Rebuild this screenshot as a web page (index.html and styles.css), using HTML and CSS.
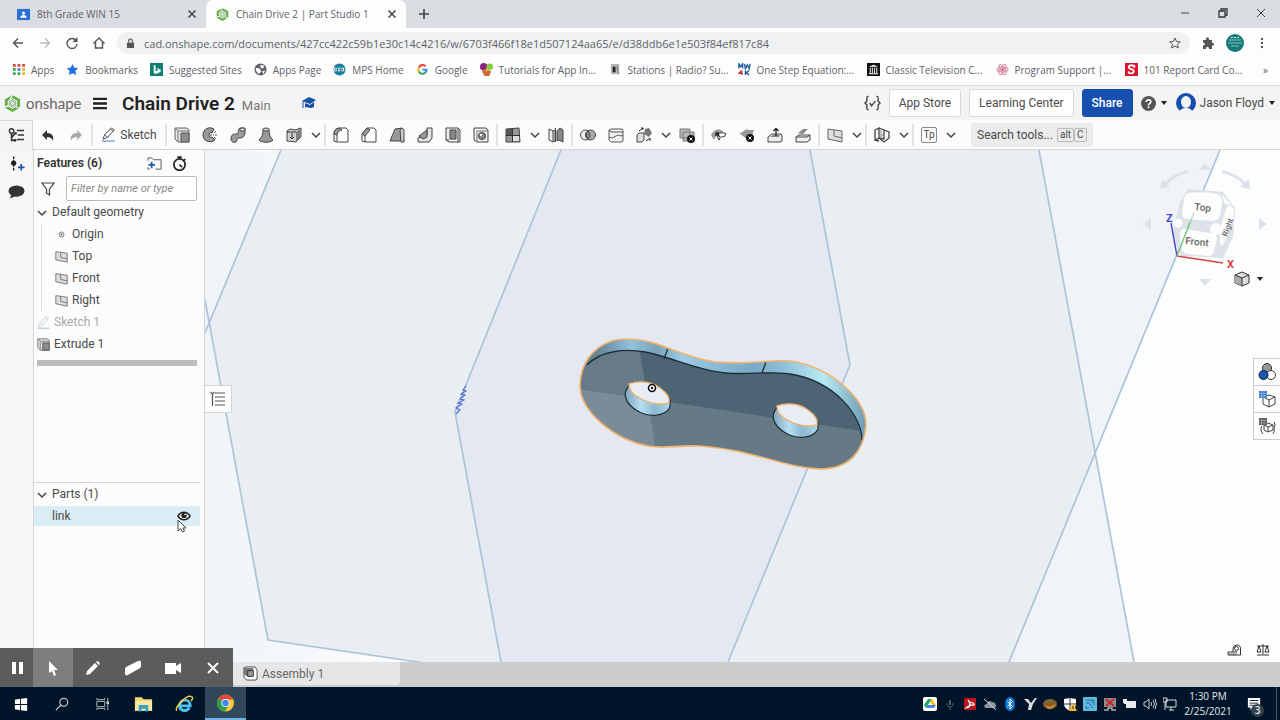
FILE: index.html
```html
<!DOCTYPE html>
<html lang="en">
<head>
    <meta charset="UTF-8">
    <meta name="viewport" content="width=device-width, initial-scale=1.0">
    <title>Chain Drive 2 | Part Studio 1</title>
    <link rel="stylesheet" href="styles.css">
</head>
<body>
    <!-- shared icons -->
    <svg class="sprite" aria-hidden="true">
        <symbol id="i-close" viewBox="0 0 10 10"><path d="M1.5 1.5l7 7M8.5 1.5l-7 7" fill="none" stroke="currentColor" stroke-width="1.5"/></symbol>
        <symbol id="i-chevron" viewBox="0 0 10 10"><path d="M1 3l4 4 4-4" fill="none" stroke="#444" stroke-width="1.5"/></symbol>
        <symbol id="i-caret" viewBox="0 0 8 8"><path d="M1 2h6L4 6z" fill="currentColor"/></symbol>
        <symbol id="i-logo" viewBox="0 0 18 18">
            <path d="M9 0l8 4.500v9L9 18l-8-4.500v-9z" fill="#5fb146"/>
            <path d="M9 3.500l5 2.700v5.600l-5 2.700-5-2.700V6.200z" fill="#fff"/>
            <path d="M9 0L6.500 4.500M17 13.500h-4M1 13l4-2" stroke="#fff" stroke-width="1.300"/>
            <path d="M9 5l3.500 2v4L9 13l-3.500-2V7z" fill="none" stroke="#888"/>
            <circle cx="9" cy="9" r="2" fill="#fff" stroke="#5fb146"/>
        </symbol>
        <symbol id="i-extrude" viewBox="0 0 16 16">
            <path d="M1 1h12l2 2v12H4l-3-3z" fill="#e4e4e4" stroke="#666"/>
            <path d="M4 15V4h11M1 1l3 3" fill="none" stroke="#777"/>
            <path d="M7 6h8v9H7z" fill="#8d8d8d" stroke="#555"/>
        </symbol>
        <symbol id="i-sketch" viewBox="0 0 16 16">
            <path d="M2 13l2-5 7-7 3 2-7 8zM4 8l3 3M10 2l3 3" fill="none" stroke="currentColor"/>
            <path d="M1 15h14" stroke="#5b8fc9" stroke-width="1.2"/>
        </symbol>
        <symbol id="i-plane" viewBox="0 0 16 16">
            <path d="M1 2l14 2v11L1 12z" fill="#ddd" stroke="#666"/>
            <path d="M7 3v6l8 2" fill="none" stroke="#666"/>
        </symbol>
    </svg>

    <header class="browser">
        <nav class="tab-bar" aria-label="Browser tabs">
            <div class="tab">
                <svg class="tab-icon" viewBox="0 0 14 14"><path d="M0 1h14v12H0z" fill="#2a6fd6"/><circle cx="7" cy="5.5" r="1.7" fill="#fff"/><path d="M3.5 10.5c0-4 7-4 7 0z" fill="#fff"/></svg>
                <a href="#">8th Grade WIN 15</a>
                <button class="tab-close" aria-label="Close tab"><svg><use href="#i-close"/></svg></button>
            </div>
            <div class="tab tab-active">
                <svg class="tab-icon"><use href="#i-logo"/></svg>
                <a href="#">Chain Drive 2 | Part Studio 1</a>
                <button class="tab-close" aria-label="Close tab"><svg><use href="#i-close"/></svg></button>
            </div>
            <button class="new-tab" aria-label="New tab"><svg viewBox="0 0 12 12"><path d="M6 1v10M1 6h10" stroke="#444" stroke-width="1.6"/></svg></button>
            <div class="window-buttons">
                <button aria-label="Minimize"><svg viewBox="0 0 10 10"><path d="M1 5h8" stroke="#444"/></svg></button>
                <button aria-label="Restore"><svg viewBox="0 0 10 10"><path d="M1 3h6v6H1zM3 3V1h6v6H7" fill="none" stroke="#333" stroke-width="1.3"/></svg></button>
                <button aria-label="Close"><svg viewBox="0 0 10 10"><path d="M1 1l8 8M9 1L1 9" stroke="#444"/></svg></button>
            </div>
        </nav>

        <div class="address-row">
            <button class="nav-btn" aria-label="Back"><svg viewBox="0 0 12 12"><path d="M11 6H1.5M6 1.5L1.5 6 6 10.5" fill="none" stroke="#555" stroke-width="1.4"/></svg></button>
            <button class="nav-btn" aria-label="Forward"><svg viewBox="0 0 12 12"><path d="M1 6h9.5M6 1.5L10.5 6 6 10.5" fill="none" stroke="#bbb" stroke-width="1.4"/></svg></button>
            <button class="nav-btn" aria-label="Reload"><svg viewBox="0 0 12 12"><path d="M10 3.500A5 5 0 1 0 11 7" fill="none" stroke="#555" stroke-width="1.4"/><path d="M11.500 0v5h-5z" fill="#555"/></svg></button>
            <button class="nav-btn" aria-label="Home"><svg viewBox="0 0 12 12"><path d="M.5 6.500L6 1l5.500 5.500M2.500 5v6h7V5" fill="none" stroke="#555" stroke-width="1.4"/></svg></button>
            <div class="omnibox">
                <svg class="lock" viewBox="0 0 10 12"><path d="M1 5h8v6H1z" fill="#555"/><path d="M3 5V3a2 2 0 0 1 4 0v2" fill="none" stroke="#555" stroke-width="1.3"/></svg>
                <input type="text" aria-label="Address" value="cad.onshape.com/documents/427cc422c59b1e30c14c4216/w/6703f466f18e1d507124aa65/e/d38ddb6e1e503f84ef817c84">
                <button aria-label="Bookmark"><svg viewBox="0 0 12 12"><path d="M6 1l1.500 3.500 3.700.3-2.800 2.500.9 3.700L6 9l-3.300 2 .9-3.700L.8 4.800l3.700-.3z" fill="none" stroke="#555"/></svg></button>
            </div>
            <button class="ext-btn" aria-label="Extensions"><svg viewBox="0 0 12 12"><path d="M1 3h3c-.8-3.300 3.800-3.300 3 0h3v3c3-.5 3 3 0 2.500V12H7c0-3-3-3-3 0H1V8.500c2.500 0 2.500-3 0-3z" fill="#555"/></svg></button>
            <button class="ext-btn profile" aria-label="Profile"><svg viewBox="0 0 18 18"><circle cx="9" cy="9" r="9" fill="#137a78"/><path d="M3 6h12M2 9h14M5 12h8" stroke="#8cc5c2"/><path d="M5 3.500h8" stroke="#cfe6e4" stroke-dasharray="2 1"/></svg></button>
            <button class="ext-btn" aria-label="Menu"><svg viewBox="0 0 12 12"><circle cx="6" cy="2" r="1.2" fill="#555"/><circle cx="6" cy="6" r="1.2" fill="#555"/><circle cx="6" cy="10" r="1.2" fill="#555"/></svg></button>
        </div>

        <nav class="bookmarks" aria-label="Bookmarks">
            <a href="#"><svg viewBox="0 0 14 14"><path d="M1 2.500h3m2 0h3m2 0h3" stroke="#d84a3b" stroke-width="3"/><path d="M1 7h3" stroke="#3fa757" stroke-width="3"/><path d="M6 7h3" stroke="#4285f4" stroke-width="3"/><path d="M11 7h3m-3 4.500h3" stroke="#f0b429" stroke-width="3"/><path d="M1 11.500h3m2 0h3" stroke="#3fa757" stroke-width="3"/></svg>Apps</a>
            <a href="#"><svg viewBox="0 0 14 14"><path d="M7 1l2 4 4 .5-3 3 1 4.500L7 11l-4 2 1-4.500-3-3L5 5z" fill="#1f6fe0"/></svg>Bookmarks</a>
            <a href="#"><svg viewBox="0 0 14 14"><path d="M0 0h14v14H0z" fill="#0b8173"/><path d="M4 2l2 1v6l3-1.500L6.500 5l5 2v2.500L6 12l-2-1.500z" fill="#fff"/></svg>Suggested Sites</a>
            <a href="#"><svg viewBox="0 0 14 14"><circle cx="7" cy="7" r="6.5" fill="#5f6368"/><path d="M2 5l4 1 2 3-3 3-3-4zM7 2l4 1-1 3-3-1zM9 9l3-1-2 4z" fill="#fff"/></svg>Apps Page</a>
            <a href="#"><svg viewBox="0 0 14 14"><circle cx="7" cy="7" r="6.5" fill="#1583a0"/><path d="M1 7h12" stroke="#fff" stroke-width="4" stroke-dasharray="3 1"/><path d="M2 7h10" stroke="#17517a" stroke-width="2" stroke-dasharray="1 1"/></svg>MPS Home</a>
            <a href="#"><svg viewBox="0 0 14 14"><g fill="none" stroke-width="2.2"><path d="M3 5a4.500 4.500 0 0 1 7.500-1.500" stroke="#ea4335"/><path d="M3 5a4.500 4.500 0 0 0 0 4" stroke="#fbbc05"/><path d="M3 9a4.500 4.500 0 0 0 7 1.500" stroke="#34a853"/><path d="M10 10.500c1-1 1.300-2 1.300-3.300H7" stroke="#4285f4"/></g></svg>Google</a>
            <a href="#" class="long"><svg viewBox="0 0 14 14"><circle cx="4" cy="4" r="4" fill="#8a2585"/><circle cx="10.5" cy="4" r="3.5" fill="#8cc63f"/><path d="M2 9l5-2 5 2-2 5H5z" fill="#cc6a2b"/><path d="M6 6h2v3H6z" fill="#f2c230"/></svg>Tutorials for App In...</a>
            <a href="#" class="long"><svg viewBox="0 0 14 14"><path d="M2 1h9v11H2z" fill="#b5b5b5"/><path d="M4 4h3v6H4z" fill="#222"/><path d="M9 3l2 9h-1L8 4z" fill="#777"/></svg>Stations | Radio? Su...</a>
            <a href="#" class="long"><svg viewBox="0 0 14 14"><path d="M1 6V1l2 3 2-3v5M7 1l1 5 2-4 2 4 1-5" fill="none" stroke="#1c5a9c" stroke-width="1.5"/><path d="M4 8l-3 3h4M4 8v5" fill="none" stroke="#c8343b" stroke-width="1.5"/><path d="M8 8v5M12 8l-3 2.500 3 2.500" fill="none" stroke="#1c5a9c" stroke-width="1.5"/></svg>One Step Equation:...</a>
            <a href="#" class="long"><svg viewBox="0 0 14 14"><path d="M0 0h14v14H0z" fill="#111"/><path d="M2 4l5-2 5 2zM2 11h10v1H2z" fill="#fff"/><path d="M3.500 5v6m2.300-6v6m2.400-6v6m2.300-6v6" stroke="#fff"/></svg>Classic Television C...</a>
            <a href="#" class="long"><svg viewBox="0 0 14 14"><g fill="none" stroke="#dc8fa8" stroke-width="1.2"><ellipse cx="7" cy="7" rx="6" ry="2.5"/><ellipse cx="7" cy="7" rx="6" ry="2.5" transform="rotate(60 7 7)"/><ellipse cx="7" cy="7" rx="6" ry="2.5" transform="rotate(120 7 7)"/></g><circle cx="7" cy="7" r="1.3" fill="#b9486f"/></svg>Program Support |...</a>
            <a href="#" class="long"><svg viewBox="0 0 14 14"><path d="M0 0h14v14H0z" fill="#d8132b"/><path d="M10 5V3C6 1.500 3 3 4.500 5.500c1.500 1.500 5 1 5 3.500 0 2-3 3-5.500 1.500V9" fill="none" stroke="#fff" stroke-width="2"/></svg>101 Report Card Co...</a>
            <button class="more" aria-label="More bookmarks">»</button>
        </nav>
    </header>

    <header class="doc-header">
        <a class="brand" href="#"><svg viewBox="0 0 18 18"><use href="#i-logo"/></svg>onshape</a>
        <button class="hamburger" aria-label="Menu"><svg viewBox="0 0 15 14"><path d="M0 2h15M0 7h15M0 12h15" stroke="#222" stroke-width="2.6"/></svg></button>
        <h1>Chain Drive 2</h1>
        <span class="workspace">Main</span>
        <svg class="grad-cap" viewBox="0 0 14 12"><path d="M0 4l7-4 7 3-6 4z" fill="#1a4fa8"/><path d="M3 6l5 2 4-3v5l-3 1-6-1z" fill="#1a4fa8"/><path d="M1 4v7" stroke="#1a4fa8"/></svg>
        <div class="header-actions">
            <button class="icon-btn" aria-label="Notices"><svg viewBox="0 0 18 16"><path d="M5 1H4Q3 1 3 3v3L1 8l2 2v3q0 2 1 2h1M13 1h1q1 0 1 2v3l2 2-2 2v3q0 2-1 2h-1M6 8l2 3 4-5" fill="none" stroke="#444" stroke-width="1.5"/></svg></button>
            <button class="btn">App Store</button>
            <button class="btn">Learning Center</button>
            <button class="btn btn-primary">Share</button>
            <button class="help" aria-label="Help"><svg class="help-icon" viewBox="0 0 16 16"><circle cx="8" cy="8" r="8" fill="#555"/><path d="M5.500 6.500C5.500 3 11 3.500 10.500 6.500 10 8 8 8 8 10" fill="none" stroke="#fff" stroke-width="1.7"/><circle cx="8" cy="12" r="1.1" fill="#fff"/></svg><svg class="caret"><use href="#i-caret"/></svg></button>
            <button class="user"><svg class="avatar" viewBox="0 0 20 20"><circle cx="10" cy="10" r="10" fill="#164fae"/><ellipse cx="10" cy="9" rx="5" ry="6" fill="#f4f4f4"/><path d="M3 20c1-4 4-5 7-5s6 1 7 5z" fill="#f4f4f4"/></svg>Jason Floyd<svg class="caret"><use href="#i-caret"/></svg></button>
        </div>
    </header>

    <div class="toolbar">
        <div class="rail-top"><button class="tool" aria-label="Feature list"><svg viewBox="0 0 18 16"><circle cx="4" cy="3.5" r="2.5" fill="none" stroke="#333" stroke-width="1.5"/><path d="M4 6v8h4M4 11l4-5M10 3h8M11 8h7M10 13h8" fill="none" stroke="#333" stroke-width="1.8"/><circle cx="8.5" cy="6" r="1.5" fill="#333"/><circle cx="8" cy="14" r="1.5" fill="#333"/></svg></button></div>
        <div class="tool-group undo-group">
            <button class="tool" aria-label="Undo"><svg viewBox="0 0 16 16"><path d="M7 3v3c5 0 7 3 6 8-1-3-3-4-6-4v3L2 8z" fill="#333"/></svg></button>
            <button class="tool" aria-label="Redo"><svg viewBox="0 0 16 16"><path d="M9 3v3c-5 0-7 3-6 8 1-3 3-4 6-4v3l5-5z" fill="#aaa"/></svg></button>
        </div>
        <div class="tool-group sketch-group">
            <button class="sketch-btn"><svg><use href="#i-sketch"/></svg>Sketch</button>
        </div>
        <div class="tool-group">
            <button class="tool" aria-label="Extrude"><svg><use href="#i-extrude"/></svg></button>
            <button class="tool" aria-label="Revolve"><svg viewBox="0 0 16 16"><path d="M12 2C7-1 1 2 1 8s7 9 12 5l-3-3C6 12 6 4 10 6z" fill="#9a9a9a" stroke="#444"/><path d="M8 8h2m1 0h1m1 0h2M12 6l2-2m-2 6l2 2" stroke="#555"/></svg></button>
            <button class="tool" aria-label="Sweep"><svg viewBox="0 0 16 16"><path d="M1 12c0-5 3-5 5-5 4 0 1-5 4-6h5v4c0 6-4 6-6 6-3 0-1 2-3 4-2 1-5 0-5-3z" fill="#9a9a9a" stroke="#444"/><ellipse cx="12.5" cy="2.5" rx="2.5" ry="1.5" fill="#eee" stroke="#444"/></svg></button>
            <button class="tool" aria-label="Loft"><svg viewBox="0 0 16 16"><path d="M5 2h6c0 5 1 9 4 11-3 3-11 3-14 0 3-2 4-6 4-11z" fill="#9a9a9a" stroke="#444"/><ellipse cx="8" cy="2.5" rx="3" ry="1.5" fill="#ddd" stroke="#444"/></svg></button>
            <button class="tool" aria-label="Thicken"><svg viewBox="0 0 16 16"><path d="M1 4l3-2 5 1 6-2v9l-5 5-9-1z" fill="#d0d0d0" stroke="#444"/><path d="M10 5v10l5-5V1z" fill="#808080"/><path d="M1 5h9M6 6v6M4 10l2 2 2-2" fill="none" stroke="#333"/></svg></button>
            <button class="drop" aria-label="More"><svg><use href="#i-chevron"/></svg></button>
        </div>
        <div class="tool-group">
            <button class="tool" aria-label="Fillet"><svg viewBox="0 0 16 16"><path d="M1 14V7q0-5 5-6h7l2 2v12H4z" fill="#fff" stroke="#444"/><path d="M1 7q0-5 5-6l3 2Q5 3 4 8z" fill="#999" stroke="#444"/><path d="M4 8v7" stroke="#444"/></svg></button>
            <button class="tool" aria-label="Chamfer"><svg viewBox="0 0 16 16"><path d="M1 14V7l5-6h7l2 2v12H4z" fill="#fff" stroke="#444"/><path d="M1 7l5-6 3 2-5 6z" fill="#999" stroke="#444"/><path d="M4 9v6" stroke="#444"/></svg></button>
            <button class="tool" aria-label="Draft"><svg viewBox="0 0 16 16"><path d="M6 2l7-1 2 13H1z" fill="#999" stroke="#444"/><path d="M11 3l2-2 2 2v12h-3z" fill="#ccc" stroke="#444"/></svg></button>
            <button class="tool" aria-label="Rib"><svg viewBox="0 0 16 16"><path d="M1 11l9-3V1h5v10l-3 4H1z" fill="#e4e4e4" stroke="#444"/><path d="M2 9l8-6v7l-4 2z" fill="#999" stroke="#444"/></svg></button>
            <button class="tool" aria-label="Shell"><svg viewBox="0 0 16 16"><path d="M1 1h12l2 2v12H4l-3-2z" fill="#eee" stroke="#444"/><path d="M5 3h6v9H5z" fill="#888" stroke="#444"/><path d="M13 2v13M1 13h3" stroke="#444"/></svg></button>
            <button class="tool" aria-label="Hole"><svg viewBox="0 0 16 16"><path d="M1 1h12l2 2v12H4l-3-2z" fill="#eee" stroke="#444"/><path d="M4 15V4h11" fill="none" stroke="#777"/><circle cx="9" cy="9" r="3.5" fill="#888" stroke="#444"/><circle cx="8" cy="8" r="1.2" fill="#eee"/></svg></button>
        </div>
        <div class="tool-group">
            <button class="tool" aria-label="Pattern"><svg viewBox="0 0 16 16"><path d="M1 2l13-1 1 14H1z" fill="#999" stroke="#444"/><path d="M1 2h6v6H1z" fill="#555"/><path d="M8 9h6v5H8z" fill="#ddd"/><path d="M7.500 2v13M1 8.500h14" stroke="#333"/></svg></button>
            <button class="drop" aria-label="More"><svg><use href="#i-chevron"/></svg></button>
            <button class="tool" aria-label="Mirror"><svg viewBox="0 0 16 16"><path d="M1 2l4 2v11l-4-2zM5 4l2-1v11l-2 1" fill="#eee" stroke="#444"/><path d="M9 4l3-3 3 2v12l-4-2-2 1z" fill="#888" stroke="#444"/><path d="M7.500 1v14" stroke="#444"/></svg></button>
        </div>
        <div class="tool-group">
            <button class="tool" aria-label="Boolean"><svg viewBox="0 0 16 16"><circle cx="5.5" cy="8" r="5" fill="#eee" stroke="#444"/><circle cx="10.5" cy="8" r="5" fill="#aaa" stroke="#444"/><path d="M8 4a5 5 0 0 1 0 8 5 5 0 0 1 0-8z" fill="#888" stroke="#444"/></svg></button>
            <button class="tool" aria-label="Split"><svg viewBox="0 0 16 16"><path d="M1 3l2-1h11l1 2v10l-2 1H3l-2-2z" fill="#f2f2f2" stroke="#555"/><path d="M1 10c5 3 7-4 12-1l2-1M1 3l2 2h12" fill="none" stroke="#555"/></svg></button>
            <button class="tool" aria-label="Transform"><svg viewBox="0 0 16 16"><path d="M1 8l2-2h5v7l-2 2H1z" fill="#ddd" stroke="#444"/><path d="M9 2l4-1 3 5-3 4-5-3z" fill="#777"/><path d="M3 4l4-3M5 1h2v2M10 14l4-3v3" fill="none" stroke="#222"/></svg></button>
            <button class="drop" aria-label="More"><svg><use href="#i-chevron"/></svg></button>
            <button class="tool" aria-label="Delete part"><svg viewBox="0 0 16 16"><path d="M1 2h10v9H1zM4 5h11v9H4z" fill="#bbb" stroke="#777"/><circle cx="12" cy="12" r="4" fill="#111"/><path d="M10.500 10.500l3 3m0-3l-3 3" stroke="#fff"/></svg></button>
        </div>
        <div class="tool-group">
            <button class="tool" aria-label="Modify fillet"><svg viewBox="0 0 16 16"><path d="M0 8c3-6 9-8 12-3l-3 4C7 7 5 8 3 13z" fill="#999"/><path d="M6 9c3-4 6-4 9-2l-2 3c-2-1-4 0-5 3z" fill="#fff" stroke="#333"/><path d="M5 6l4 4M5 6h3M5 6v3" fill="none" stroke="#222" stroke-width="1.3"/></svg></button>
            <button class="tool" aria-label="Delete face"><svg viewBox="0 0 16 16"><path d="M0 6c4 1 5-5 10-3l5 0-2 6-4 4z" fill="#999"/><circle cx="11" cy="11" r="4" fill="#111"/><path d="M9.500 9.500l3 3m0-3l-3 3" stroke="#fff"/></svg></button>
            <button class="tool" aria-label="Move face"><svg viewBox="0 0 16 16"><path d="M1 10l4-3h9l1 2v5l-2 1H1z" fill="#eee" stroke="#444"/><path d="M3 10l3-2h7l-1 2z" fill="#888"/><path d="M9 9V2M6.500 4L9 1.500 11.500 4" fill="none" stroke="#222" stroke-width="1.3"/></svg></button>
            <button class="tool" aria-label="Replace face"><svg viewBox="0 0 16 16"><path d="M1 10l3-2h11v5l-3 2H1z" fill="#eee" stroke="#444"/><path d="M1 10h11l3-2" fill="none" stroke="#444"/><path d="M2 6c4 0 5-5 8-4h4c-3 0-4 5-7 5z" fill="#888"/></svg></button>
        </div>
        <div class="tool-group">
            <button class="tool" aria-label="Plane"><svg><use href="#i-plane"/></svg></button>
            <button class="drop" aria-label="More"><svg><use href="#i-chevron"/></svg></button>
        </div>
        <div class="tool-group">
            <button class="tool" aria-label="Frame"><svg viewBox="0 0 16 16"><path d="M1 3l4-2v10l-4 2zM5 1l5 2v9l-5-1M10 3l5 2v6l-5 4-5-4M1 13l4 1" fill="none" stroke="#444" stroke-width="1.3"/><path d="M7 3v7l3-4" fill="none" stroke="#888"/></svg></button>
            <button class="drop" aria-label="More"><svg><use href="#i-chevron"/></svg></button>
        </div>
        <div class="tool-group">
            <button class="tool"><span class="tp">Tp</span></button>
            <button class="drop" aria-label="More"><svg><use href="#i-chevron"/></svg></button>
        </div>
        <button class="search-tools">Search tools... <kbd>alt</kbd><kbd>C</kbd></button>
    </div>

    <main class="workspace-area">
        <aside class="rail">
            <button aria-label="Add feature"><svg viewBox="0 0 18 18"><path d="M6 1v16" stroke="#222" stroke-width="1.5" stroke-dasharray="3 1"/><circle cx="6" cy="8" r="2.8" fill="#222"/><path d="M14 9v7M10.500 12.500h7" stroke="#1b56b5" stroke-width="1.8"/></svg></button>
            <button aria-label="Comments"><svg viewBox="0 0 18 18"><ellipse cx="9" cy="8" rx="8.5" ry="6" fill="#333"/><path d="M4 11l-2 5 7-3z" fill="#333"/></svg></button>
        </aside>

        <section class="panel">
            <div class="features">
                <div class="panel-head">
                    <h2>Features (6)</h2>
                    <button aria-label="New folder"><svg viewBox="0 0 16 14"><path d="M1 4V1h4l2 2h8v10H9M1 11v2h2" fill="none" stroke="#555"/><path d="M5 5v7M1.500 8.500h7" stroke="#1b56b5" stroke-width="1.8"/></svg></button>
                    <button aria-label="Rebuild times"><svg viewBox="0 0 14 14"><circle cx="7" cy="8" r="5.3" fill="none" stroke="#222" stroke-width="1.6"/><path d="M5 1h4M7 1v2M7 8l2.500 2.500M11 3l1.500 1" stroke="#222" stroke-width="1.5"/></svg></button>
                </div>
                <div class="filter-row">
                    <svg class="funnel" viewBox="0 0 14 14"><path d="M1 1h12L8.500 7v6L5.500 11V7z" fill="none" stroke="#444" stroke-width="1.2"/></svg>
                    <input type="text" aria-label="Filter" placeholder="Filter by name or type">
                </div>
                <ul class="tree">
                    <li><svg class="twist"><use href="#i-chevron"/></svg>Default geometry
                        <ul class="branch">
                            <li><svg class="node" viewBox="0 0 14 14"><circle cx="7" cy="7" r="2.7" fill="none" stroke="#777"/><circle cx="7" cy="7" r="1" fill="#444"/></svg>Origin</li>
                            <li><svg class="node"><use href="#i-plane"/></svg>Top</li>
                            <li><svg class="node"><use href="#i-plane"/></svg>Front</li>
                            <li><svg class="node"><use href="#i-plane"/></svg>Right</li>
                        </ul>
                    </li>
                    <li class="hidden-item"><svg class="node"><use href="#i-sketch"/></svg>Sketch 1</li>
                    <li><svg class="node"><use href="#i-extrude"/></svg>Extrude 1</li>
                </ul>
                <div class="rollback"></div>
            </div>
            <div class="parts">
                <h2><svg class="twist"><use href="#i-chevron"/></svg>Parts (1)</h2>
                <div class="part-row">link
                    <button aria-label="Hide part"><svg viewBox="0 0 14 10"><path d="M1 5c3-5 9-5 12 0-3 5-9 5-12 0z" fill="#fff" stroke="#222" stroke-width="1.5"/><circle cx="7" cy="4.5" r="2.7" fill="#222"/><circle cx="8" cy="3.5" r=".8" fill="#fff"/></svg></button>
                </div>
            </div>
            <svg class="pointer" viewBox="0 0 10 14"><path d="M1 1v11l2.500-2.500L5.500 13l2-1L6 9h3z" fill="#fff" stroke="#444"/></svg>
        </section>

        <section class="viewport">
            <svg class="scene" viewBox="205 150 1075 512" preserveAspectRatio="xMinYMin slice">
                <defs>
                    <linearGradient id="rim" x1="583" y1="0" x2="866" y2="0" gradientUnits="userSpaceOnUse">
                        <stop offset="0" stop-color="#5f7583"/><stop offset=".08" stop-color="#6d91a7"/><stop offset=".17" stop-color="#94c2dc"/>
                        <stop offset=".26" stop-color="#78a3bb"/><stop offset=".35" stop-color="#9bcbe6"/><stop offset=".6" stop-color="#78a9c5"/>
                        <stop offset=".7" stop-color="#8dbdd7"/><stop offset=".85" stop-color="#b7ebf3"/><stop offset="1" stop-color="#6f9bb3"/>
                    </linearGradient>
                    <linearGradient id="bore"><stop offset="0" stop-color="#7fa5ba"/><stop offset=".35" stop-color="#b5dff2"/><stop offset=".65" stop-color="#8db8d0"/><stop offset="1" stop-color="#a9d6ec"/></linearGradient>
                    <linearGradient id="haze"><stop offset="0" stop-color="#f0f4f8"/><stop offset="1" stop-color="#fcfdfd"/></linearGradient>
                    <clipPath id="face"><path d="M587 365C600 351 625 348 645 352C675 358 695 370 725 373C750 375 765 371 790 374C835 381 862 416 862 440C858 462 840 469 820 469C780 467 755 450 700 446C675 445 665 449 648 446C615 440 580 412 580 385Q581 374 587 365z"/></clipPath>
                    <g id="hole">
                        <path d="M629 386C622 393 625 403 636 410C648 418 665 417 670 407V400z" fill="url(#bore)" stroke="#1f2d36" stroke-width="1.2"/>
                        <path d="M629 384C640 380 652 382 660 388Q671 396 669 403C658 406 645 402 636 396Q629 391 629 384z" fill="#e9edf4" stroke="#f2b36e" stroke-width="1.4"/>
                    </g>
                </defs>
                <path d="M205 150h1075v512H205z" fill="#fcfdfd"/>
                <path d="M205 150h76v180l144 332H205z" fill="url(#haze)"/>
                <path d="M1039 150h181l-125 303 39 209h-125z" fill="#f0f4f8"/>
                <path d="M281 150L209 322 268 640 425 662H1009L1095 453 1039 150z" fill="#e9eef2"/>
                <path d="M561 150L455 410 501 662H728L850 365 810 150z" fill="#e4e8f0"/>
                <g class="plane-lines">
                    <path d="M281 150L205 333M205 300L268 640 425 663M561 150L455 412 501 662M810 150L850 365 728 662M1039 150L1134 662M1220 150L1009 662"/>
                </g>
                <path class="plane-label" d="M466 386l-3 4 3 1-5 3 4 1-5 4 4 1-6 3 4 1-6 4 4 2-4 4"/>

                <path d="M580 385C581 358 600 339 627 339C660 339 675 356 715 362C745 365 760 360 790 361C830 367 866 398 866 425C864 450 850 469 820 469C780 467 755 450 700 446C675 445 665 449 648 446C615 440 580 412 580 385z" fill="url(#rim)"/>
                <g clip-path="url(#face)">
                    <path d="M570 330h300v150H570z" fill="#657a85"/>
                    <path d="M570 330h66l12 69-78-11z" fill="#667b87"/>
                    <path d="M636 330h240v103L648 399z" fill="#4c6474"/>
                    <path d="M570 388l78 11 9 61h-87z" fill="#798c97"/>
                </g>
                <path d="M587 365C600 351 625 348 645 352C675 358 695 370 725 373C750 375 765 371 790 374C835 381 862 416 862 440M664 359l4-11M762 373l4-11" fill="none" stroke="#1f2d36" stroke-width="1.3"/>
                <path d="M580 385C581 358 600 339 627 339C660 339 675 356 715 362C745 365 760 360 790 361C830 367 866 398 866 425C864 450 850 469 820 469C780 467 755 450 700 446C675 445 665 449 648 446C615 440 580 412 580 385z" fill="none" stroke="#f2b36e" stroke-width="1.6"/>
                <use href="#hole"/>
                <use href="#hole" x="148" y="22"/>
                <circle cx="652" cy="388" r="3.5" fill="#fff" stroke="#111" stroke-width="1.6"/>
                <circle cx="652" cy="388" r="1.2" fill="#111"/>
            </svg>

            <button class="list-toggle" aria-label="Toggle list"><svg viewBox="0 0 16 16"><path d="M5 2h10M5 6h10M5 10h10M5 14h10M2.500 3v12M.5 1l2 2 2-2" fill="none" stroke="#555" stroke-width="1.2"/></svg></button>

            <svg class="view-cube" viewBox="1140 155 140 140">
                <g fill="#dce2e8">
                    <path d="M1205 163l6 7h-12zM1205 286l-6-7h12zM1143 224l8-6v12zM1267 224l-8-6v12z"/>
                    <path d="M1187 170q-15 4-22 12l-3-3-2 10 10-2-3-3q8-8 21-11zM1223 170q14 4 22 12l4-3 1 10-10-2 3-3q-8-8-21-11z"/>
                    <path d="M1188 189l35 3 12 16-2 29-10 21-42-2-9-22 8-32z"/>
                </g>
                <g fill="#fdfdfd">
                    <path d="M1189 193q17-2 28 1 6 3 5 9l-2 13q-1 5-8 5l-25-2q-5-1-5-6l2-14q1-5 5-6zM1184 229l27 4q6 1 6 6l-3 12q-1 5-6 5l-20-2q-6-1-7-6l-1-14q0-5 4-5zM1230 206q4 1 4 5-1 16-10 32-3 5-4 0-1-15 6-34 1-4 4-3z"/>
                    <circle cx="1178" cy="223" r="4.5"/><circle cx="1216" cy="229" r="6"/>
                    <path d="M1222 194l10 12-8-3z"/>
                </g>
                <g fill="none" stroke-width="1.4">
                    <path d="M1171 223l6 33" stroke="#4848cf"/>
                    <path d="M1177 256l46 7" stroke="#d64545"/>
                    <path d="M1177 256l14-36" stroke="#6fc67a"/>
                    <path d="M1190 222l4-9" stroke="#b5e2b8"/>
                </g>
                <g class="cube-text">
                    <text x="1194" y="210" transform="rotate(6 1194 210)">Top</text>
                    <text x="1185" y="244" transform="rotate(6 1185 244)">Front</text>
                    <text class="side" x="1227" y="237" transform="rotate(-70 1227 237)">Right</text>
                </g>
                <text class="axis axis-z" x="1166" y="222">Z</text>
                <text class="axis axis-x" x="1227" y="268">X</text>
            </svg>
            <button class="view-menu" aria-label="View options"><svg class="cube-icon" viewBox="0 0 16 16"><path d="M8 1l7 3v8l-7 3-7-3V4z" fill="#ddd" stroke="#333"/><path d="M1 4l7 3v8l-7-3z" fill="#aaa"/><path d="M1 4l7 3 7-3M8 7v8" fill="none" stroke="#333"/></svg><svg class="caret"><use href="#i-caret"/></svg></button>

            <div class="dock">
                <button aria-label="Appearance"><svg viewBox="0 0 18 18"><circle cx="9" cy="5" r="4.5" fill="#999" stroke="#333"/><circle cx="13" cy="12" r="4.5" fill="#fff" stroke="#333"/><circle cx="5.5" cy="12" r="4.5" fill="#1b56b5" stroke="#123"/></svg></button>
                <button aria-label="Configurations"><svg viewBox="0 0 18 18"><path d="M11 5l6 2v7l-6 3-6-3V7zM5 7l6 3 6-3M11 10v7" fill="#fff" stroke="#444"/><path d="M1 1h8v7H1z" fill="#3f7bd0"/><path d="M1 3.500h8M1 6h8M3.500 1v7M6 1v7" stroke="#9dbfe9" stroke-width=".6"/></svg></button>
                <button aria-label="Custom tables"><svg viewBox="0 0 18 18"><path d="M10 6l5 2v5l-5 2-4-2V8zM6 8l4 2 5-2M10 10v5M4 9q-1 2-1 4t2 4M16 5q2 3 0 6 1 3-1 6" fill="none" stroke="#444"/><path d="M1 1h8v7H1z" fill="#555"/><path d="M1 3.500h8M1 6h8M3.500 1v7M6 1v7" stroke="#bbb" stroke-width=".6"/></svg></button>
            </div>
            <div class="measure">
                <button aria-label="Measure"><svg viewBox="0 0 14 12"><path d="M1 8h5V5q0-4 4-4t3.500 5V11H1zM6 8h4" fill="#fff" stroke="#333"/><circle cx="9.5" cy="4.5" r="2" fill="none" stroke="#333"/><path d="M3 9v2m2-2v2m2-2v2m2-2v2" stroke="#333" stroke-width=".7"/></svg></button>
                <button aria-label="Mass properties"><svg viewBox="0 0 14 12"><path d="M1 2h12M7 0v10M1 11h12M3 2L1 8h4zM11 2L9 8h4z" fill="none" stroke="#333"/></svg></button>
            </div>
        </section>
    </main>

    <footer class="doc-tabs">
        <a href="#" class="doc-tab"><svg viewBox="0 0 16 16"><path d="M1 2l2-1h10l2 3v10l-2 1H4l-3-3z" fill="#fff" stroke="#444"/><path d="M1 2h10v9H4L1 9z" fill="#777"/><path d="M5 5h6v6H5z" fill="#999" stroke="#333"/></svg>Assembly 1</a>
        <div class="recorder">
            <button aria-label="Pause"><svg viewBox="0 0 16 16"><path d="M3 2h4v12H3zM10 2h4v12h-4z" fill="#fff"/></svg></button>
            <button class="selected" aria-label="Cursor"><svg viewBox="0 0 16 16"><path d="M4 1v12l3-2 2 5 2-1-2-5h4z" fill="#fff"/></svg></button>
            <button aria-label="Pen"><svg viewBox="0 0 16 16"><path d="M1 15l1-4 8-8 3 3-8 8zM11 2l1-1q2 0 3 3l-1 1z" fill="#fff"/></svg></button>
            <button aria-label="Eraser"><svg viewBox="0 0 16 16"><path d="M0 9q0-1 1-2l12-6q3-1 3 1v4q0 1-1 2L3 15q-3 1-3-1z" fill="#fff"/></svg></button>
            <button aria-label="Webcam"><svg viewBox="0 0 16 16"><path d="M0 3h11v3l5-3v10l-5-3v4H0z" fill="#fff"/></svg></button>
            <button aria-label="Close recorder"><svg viewBox="0 0 16 16"><path d="M3 3l10 10M13 3L3 13" stroke="#fff" stroke-width="1.8"/></svg></button>
        </div>
    </footer>

    <footer class="taskbar">
        <div class="launchers">
            <button aria-label="Start"><svg viewBox="0 0 16 16"><path d="M1 3l6-1v6H1zM8 2l7-1v7H8zM1 9h6v6l-6-1zM8 9h7v7l-7-1z" fill="#fff"/></svg></button>
            <button aria-label="Search"><svg viewBox="0 0 16 16"><circle cx="10" cy="6" r="4.5" fill="none" stroke="#ddd" stroke-width="1.2"/><path d="M7 9l-6 6" stroke="#ddd" stroke-width="1.2"/></svg></button>
            <button aria-label="Task view"><svg viewBox="0 0 16 16"><path d="M1 5h9v6H1zM1 1v2h9V1M1 15v-2h9v2M13.500 1v14" fill="none" stroke="#ccc"/><path d="M12 5h3v3h-3z" fill="#ccc"/></svg></button>
            <button aria-label="File Explorer"><svg class="big" viewBox="0 0 20 18"><path d="M1 2h7l2 2h9v12H1z" fill="#f5d778"/><path d="M1 6h18v10H1z" fill="#fbe7a0"/><path d="M5 10h10v7h-3v-3H8v3H5z" fill="#37a0c9"/></svg></button>
            <button aria-label="Internet Explorer"><svg class="big" viewBox="0 0 20 18"><path d="M15 13c-3 5-11 3-10-3 1-7 11-7 11 1H6" fill="none" stroke="#4fc3ee" stroke-width="3"/><path d="M2 16C-1 13 12-1 17 1q3 1 0 5" fill="none" stroke="#f4ca3f" stroke-width="1.6"/></svg></button>
            <button class="running" aria-label="Chrome"><svg class="big" viewBox="0 0 20 20"><circle cx="10" cy="10" r="9.5" fill="#fbc935"/><path d="M10 10L1.800 5A9.500 9.500 0 0 1 18.500 6H10z" fill="#dd4b3e"/><path d="M10 10L1.800 5a9.500 9.500 0 0 0 7.500 14.500L14 12z" fill="#2f9e4f"/><circle cx="10" cy="10" r="4.5" fill="#fff"/><circle cx="10" cy="10" r="3.6" fill="#4285f4"/></svg></button>
        </div>
        <div class="tray">
            <svg viewBox="0 0 14 14"><rect width="14" height="14" rx="2" fill="#fff"/><path d="M5 2h4l-4 6-2 3-2-3z" fill="#1fa463"/><path d="M9 2l4 6H9L7 4z" fill="#fbbc05"/><path d="M5 8h8l-2 3H3z" fill="#4285f4"/><path d="M5.500 8L7 5l2 3z" fill="#fff"/></svg>
            <svg viewBox="0 0 14 14"><path d="M6 3h2v5H6z" fill="#4c5d6c"/><path d="M4 6v2q3 4 6 0V6M7 10v3" fill="none" stroke="#4c5d6c"/></svg>
            <svg viewBox="0 0 14 14"><rect x="1" y="1" width="12" height="12" rx="1" fill="#b9151b"/><path d="M5 3q3 3 1 7-2 1-3 1 5-4 8-3 1-2-5-3" fill="none" stroke="#fff" stroke-width="1.2"/></svg>
            <svg viewBox="0 0 14 14"><path d="M2 11q-2-4 2-4 1-5 5-2 4 0 4 4l-1 2z" fill="#8c959e"/><path d="M1 2l12 11" stroke="#ddd"/></svg>
            <svg viewBox="0 0 14 14"><ellipse cx="7" cy="7" rx="5" ry="7" fill="#0a7be0"/><path d="M4.500 4.500l5 5L7 12V2l2.500 2.500-5 5" fill="none" stroke="#fff"/></svg>
            <svg viewBox="0 0 14 14"><path d="M1 2h4l3 4 4-5h2l-4 6-2 6-3 0 1-6z" fill="#ddd"/></svg>
            <svg viewBox="0 0 14 14"><ellipse cx="7" cy="7" rx="7" ry="5" fill="#8a5a28"/><path d="M1 5q5-5 12 0-5-1-12 0z" fill="#5a7a3a"/><path d="M1 8q6 3 12-1-2 6-8 5z" fill="#c58634"/></svg>
            <svg viewBox="0 0 14 14"><path d="M7 1l6 1v5q0 4-6 7-6-3-6-7V2z" fill="#fff"/><path d="M7 1v13M1 7h12" stroke="#333"/><path d="M10 6l4 8H6z" fill="#f5b921"/><path d="M10 9v3" stroke="#333"/></svg>
            <svg viewBox="0 0 14 14"><rect width="14" height="14" rx="1" fill="#62b8de"/><path d="M3 3h4l3 3M3 6h3l4 5M8 3h3v5M3 9v2h3" fill="none" stroke="#1a6ea8"/></svg>
            <svg viewBox="0 0 14 14"><path d="M1 1h12v9H1z" fill="#8d8d8d"/><path d="M1 13h4v-2h4v2h4" fill="none" stroke="#aaa" stroke-width="1.5"/><path d="M3 2l8 7M11 2L3 9" stroke="#cf1f28" stroke-width="2"/></svg>
            <svg viewBox="0 0 14 14"><path d="M1 4h12v7H3V7H1zM0 2h4v4H0z" fill="#e8eaec"/></svg>
            <svg viewBox="0 0 14 14"><path d="M1 5h2l3-3v10L3 9H1zM8 5q1 2 0 4M10 3q3 4 0 8M12 2q3 5 0 10" fill="none" stroke="#ccc"/></svg>
            <svg viewBox="0 0 14 14"><path d="M3 3h10v7H3zM6 13h5M8 10v3M0 1h4v4H0zM2 5v8" fill="none" stroke="#ddd"/></svg>
        </div>
        <div class="clock"><span>1:30 PM</span><span>2/25/2021</span></div>
        <button class="notifications" aria-label="Notifications">
            <svg viewBox="0 0 16 16"><path d="M1 1h14v11H7l-3 3v-3H1z" fill="#fff"/><path d="M3 4h10M3 7h10M3 9.500h6" stroke="#00152a"/></svg>
            <span class="count">3</span>
        </button>
    </footer>
</body>
</html>
```
FILE: styles.css
```css
:root {
    --ui: Roboto, "Liberation Sans", sans-serif;
    --chrome: "Open Sans", "Noto Sans", sans-serif;
    --blue: #164fae;
    --line: #d5d5d5;
    --text: #4a4a4a;
}

* {
    margin: 0;
    padding: 0;
    box-sizing: border-box;
}

body {
    height: 100vh;
    display: flex;
    flex-direction: column;
    overflow: hidden;
    font-family: var(--ui);
    font-size: 12px;
    color: var(--text);
    background: #fcfcfc;
}

button {
    border: none;
    background: none;
    font: inherit;
    color: inherit;
    display: flex;
    align-items: center;
    justify-content: center;
    flex-shrink: 0;
}

a {
    color: inherit;
    text-decoration: none;
}

svg {
    flex-shrink: 0;
    display: block;
}

.sprite {
    position: absolute;
    width: 0;
    height: 0;
}

/* browser */
.browser {
    font-family: var(--chrome);
    font-size: 10px;
    color: #5f6368;
}

.tab-bar {
    height: 28px;
    background: #dadde2;
    display: flex;
    align-items: center;
}

.tab {
    width: 200px;
    height: 28px;
    padding: 0 9px 0 10px;
    display: flex;
    align-items: center;
    gap: 7px;
}

.tab:first-child {
    width: 206px;
    padding-left: 17px;
}

.tab a {
    flex: 1;
    white-space: nowrap;
}

.tab-active {
    background: #fdfdfd;
    border-radius: 7px 7px 0 0;
}

.tab-icon {
    width: 13px;
    height: 13px;
}

.tab-close svg {
    width: 10px;
    height: 10px;
    color: #444;
}

.new-tab {
    width: 36px;
}

.new-tab svg {
    width: 12px;
    height: 12px;
}

.window-buttons {
    margin-left: auto;
    display: flex;
    padding-bottom: 3px;
}

.window-buttons button {
    width: 38px;
}

.window-buttons svg {
    width: 10px;
    height: 10px;
}

.address-row {
    height: 30px;
    display: flex;
    align-items: center;
    background: #fdfdfd;
    padding: 0 8px 0 4px;
}

.nav-btn {
    width: 27px;
}

.nav-btn svg {
    width: 12px;
    height: 12px;
}

.omnibox {
    flex: 1;
    height: 22px;
    margin: 0 8px 0 5px;
    padding: 0 9px;
    border-radius: 11px;
    background: #eff1f2;
    display: flex;
    align-items: center;
    gap: 9px;
}

.lock {
    width: 9px;
    height: 11px;
}

.omnibox input {
    flex: 1;
    border: none;
    background: none;
    font-family: var(--chrome);
    font-size: 11px;
    color: #5f6368;
    outline: none;
}

.omnibox button svg {
    width: 12px;
    height: 12px;
}

.ext-btn {
    width: 20px;
}

.ext-btn svg {
    width: 12px;
    height: 12px;
}

.profile {
    width: 34px;
}

.profile svg {
    width: 18px;
    height: 18px;
}

.bookmarks {
    height: 28px;
    display: flex;
    align-items: center;
    gap: 12px;
    padding: 0 12px 4px;
    background: #fdfdfd;
    border-bottom: 1px solid #d8dbde;
    white-space: nowrap;
}

.bookmarks a {
    display: flex;
    align-items: center;
    gap: 6px;
}

.bookmarks .long {
    width: 117px;
}

.bookmarks svg {
    width: 13px;
    height: 13px;
}

.more {
    margin-left: auto;
}

/* document header */
.doc-header {
    height: 34px;
    display: flex;
    align-items: center;
    background: #f4f4f4;
    padding: 0 4px;
}

.brand {
    display: flex;
    align-items: center;
    gap: 5px;
    font-family: Lato, sans-serif;
    font-size: 15px;
    color: #666;
    width: 89px;
}

.brand svg {
    width: 17px;
    height: 17px;
}

.hamburger svg {
    width: 14px;
    height: 13px;
}

.doc-header h1 {
    font-size: 19px;
    font-weight: 600;
    color: #222;
    margin-left: 15px;
}

.workspace {
    font-size: 13px;
    color: #777;
    padding: 4px 0 0 7px;
}

.grad-cap {
    width: 14px;
    height: 12px;
    margin-left: 31px;
}

.header-actions {
    margin-left: auto;
    display: flex;
    align-items: center;
    gap: 8px;
}

.icon-btn svg {
    width: 17px;
    height: 16px;
}

.btn {
    height: 28px;
    padding: 0 9px;
    border: 1px solid #d8d8d8;
    border-radius: 3px;
    background: #fff;
    font-size: 12px;
}

.btn-primary {
    background: var(--blue);
    border-color: var(--blue);
    color: #fff;
    font-weight: 500;
}

.help {
    gap: 4px;
}

.help-icon {
    width: 15px;
    height: 15px;
}

.caret {
    width: 8px;
    height: 8px;
    color: #222;
}

.user {
    gap: 4px;
}

.avatar {
    width: 20px;
    height: 20px;
}

/* toolbar */
.toolbar {
    height: 30px;
    display: flex;
    align-items: center;
    background: #fcfcfc;
    border-bottom: 1px solid var(--line);
}

.rail-top {
    width: 33px;
    height: 30px;
    display: flex;
    align-items: center;
    justify-content: center;
    background: #f5f5f5;
    border: 1px solid var(--line);
    border-width: 1px 1px 0 0;
}

.tool-group {
    display: flex;
    align-items: center;
    padding: 0 1px;
    border-left: 2px solid #e2e2e2;
    height: 22px;
}

.tool {
    width: 28px;
    height: 22px;
}

.tool svg {
    width: 16px;
    height: 16px;
}

.drop {
    width: 15px;
}

.drop svg {
    width: 10px;
    height: 10px;
}

.undo-group {
    border-left: none;
}

.sketch-group {
    width: 74px;
    justify-content: center;
}

.sketch-btn {
    gap: 4px;
}

.sketch-btn svg {
    width: 15px;
    height: 15px;
}

.tp {
    width: 16px;
    height: 16px;
    border: 1px solid #888;
    border-radius: 2px;
    font-size: 10px;
    line-height: 14px;
}

.search-tools {
    height: 24px;
    padding: 0 6px;
    margin-left: 12px;
    background: #ececec;
    border-radius: 2px;
}

kbd {
    font-family: var(--ui);
    font-size: 10px;
    line-height: 12px;
    padding: 0 2px;
    border: 1px solid #bbb;
    border-radius: 2px;
}

kbd:first-of-type {
    margin-left: 4px;
}

/* workspace */
.workspace-area {
    flex: 1;
    display: flex;
    min-height: 0;
}

.rail {
    width: 33px;
    background: #f6f6f6;
    display: flex;
    flex-direction: column;
    align-items: center;
    gap: 10px;
    padding-top: 5px;
}

.rail svg {
    width: 17px;
    height: 18px;
}

.panel {
    position: relative;
    width: 172px;
    display: flex;
    flex-direction: column;
    background: #fcfcfc;
    border: 1px solid var(--line);
    border-width: 0 1px;
}

.features {
    flex: 65 0 0;
    padding: 0 7px 0 3px;
}

.panel h2 {
    font-size: 12px;
}

.panel-head {
    height: 26px;
    display: flex;
    align-items: center;
    gap: 10px;
    padding-right: 10px;
}

.panel-head h2 {
    flex: 1;
    color: #333;
    font-weight: 600;
}

.panel-head svg {
    width: 15px;
    height: 15px;
}

.filter-row {
    height: 25px;
    display: flex;
    align-items: center;
    gap: 11px;
    padding-left: 4px;
}

.funnel {
    width: 14px;
    height: 14px;
}

.filter-row input {
    flex: 1;
    min-width: 0;
    height: 25px;
    padding: 0 4px;
    border: 1px solid #bbb;
    border-radius: 2px;
    font-family: var(--ui);
    font-size: 11px;
    font-style: italic;
    background: #fff;
}

.filter-row input::placeholder {
    color: #888;
}

.tree, .branch {
    list-style: none;
    line-height: 22px;
}

.tree li {
    white-space: nowrap;
}

.tree svg, .parts svg {
    display: inline-block;
    vertical-align: middle;
}

.twist {
    width: 10px;
    height: 10px;
    margin-right: 5px;
}

.branch {
    margin-left: 4px;
    padding-left: 13px;
    border-left: 1px solid #ddd;
}

.node {
    width: 13px;
    height: 13px;
    margin-right: 4px;
}

.hidden-item {
    color: #aaa;
}

.hidden-item .node {
    opacity: 0.6;
}

.rollback {
    height: 6px;
    margin-top: 5px;
    background: #bdbdbd;
}

.parts {
    flex: 35 0 0;
    margin-right: 4px;
    border-top: 1px solid var(--line);
}

.parts h2 {
    font-weight: 400;
    line-height: 23px;
    padding-left: 3px;
}

.part-row {
    height: 20px;
    display: flex;
    align-items: center;
    justify-content: space-between;
    padding: 0 9px 0 18px;
    background: #d9edf7;
}

.part-row svg {
    width: 14px;
    height: 10px;
}

.pointer {
    position: absolute;
    top: 369px;
    right: 17px;
    width: 10px;
    height: 14px;
}

/* graphics area */
.viewport {
    position: relative;
    flex: 1;
    min-width: 0;
    overflow: hidden;
}

.scene {
    width: 100%;
    height: 100%;
}

.plane-lines {
    fill: none;
    stroke: #adc3da;
    stroke-width: 1.7;
}

.plane-label {
    fill: none;
    stroke: #4a66cf;
    stroke-width: 1.1;
}

.list-toggle {
    position: absolute;
    left: 0;
    top: 235px;
    width: 27px;
    height: 28px;
    background: #fdfdfd;
    border: 1px solid var(--line);
    border-left: none;
}

.list-toggle svg {
    width: 16px;
    height: 16px;
}

.view-cube {
    position: absolute;
    top: 5px;
    right: 0;
    width: 140px;
    height: 140px;
}

.cube-text {
    font-family: var(--ui);
    font-size: 10px;
    font-weight: 500;
    fill: #666;
}

.cube-text .side {
    font-size: 8px;
}

.axis {
    font-family: var(--ui);
    font-size: 11px;
    font-weight: 700;
}

.axis-z {
    fill: #4848cf;
}

.axis-x {
    fill: #d64545;
}

.view-menu {
    position: absolute;
    top: 121px;
    right: 16px;
    gap: 6px;
}

.cube-icon {
    width: 16px;
    height: 16px;
}

.dock {
    position: absolute;
    top: 208px;
    right: 0;
    display: flex;
    flex-direction: column;
    border: 1px solid #ccc;
    border-width: 1px 0 0 1px;
    background: #fdfdfd;
}

.dock button {
    width: 26px;
    height: 27px;
    border-bottom: 1px solid #ccc;
}

.dock svg {
    width: 18px;
    height: 18px;
}

.measure {
    position: absolute;
    right: 10px;
    bottom: 6px;
    display: flex;
    gap: 15px;
}

.measure svg {
    width: 14px;
    height: 12px;
}

/* document tabs and recorder */
.doc-tabs {
    position: relative;
    height: 25px;
    background: #cdcdcd;
    padding-left: 233px;
}

.doc-tab {
    width: 167px;
    height: 23px;
    padding-left: 10px;
    display: flex;
    align-items: center;
    gap: 4px;
    background: #e6e6e6;
    border-radius: 0 0 4px 4px;
    color: #666;
}

.doc-tab svg {
    width: 15px;
    height: 15px;
}

.recorder {
    position: absolute;
    left: 0;
    bottom: 0;
    display: flex;
    background: #5c5c5c;
}

.recorder button {
    width: 40px;
    height: 39px;
}

.recorder button:first-child {
    width: 33px;
}

.recorder .selected {
    background: #7d7d7d;
}

.recorder svg {
    width: 16px;
    height: 16px;
}

/* taskbar */
.taskbar {
    height: 33px;
    display: flex;
    align-items: center;
    background: #00152a;
    color: #e4e7ea;
    font-family: var(--chrome);
}

.launchers {
    display: flex;
    flex: 1;
}

.launchers button {
    width: 41px;
    height: 33px;
}

.launchers svg {
    width: 14px;
    height: 14px;
}

.launchers .big {
    width: 19px;
    height: 18px;
}

.launchers .running {
    background: #33475a;
    border-bottom: 2px solid #6db3ec;
}

.tray {
    display: flex;
    gap: 6px;
    padding-right: 8px;
}

.tray svg {
    width: 14px;
    height: 14px;
}

.clock {
    display: flex;
    flex-direction: column;
    align-items: center;
    width: 46px;
    font-size: 10px;
    line-height: 15px;
}

.notifications {
    position: relative;
    width: 46px;
    height: 33px;
    margin-right: 3px;
    border-right: 1px solid #445566;
}

.notifications svg {
    width: 14px;
    height: 14px;
}

.count {
    position: absolute;
    right: 12px;
    bottom: 3px;
    width: 13px;
    height: 13px;
    border-radius: 50%;
    background: #33404d;
    font-size: 10px;
    font-weight: 600;
    line-height: 13px;
    text-align: center;
}
```
